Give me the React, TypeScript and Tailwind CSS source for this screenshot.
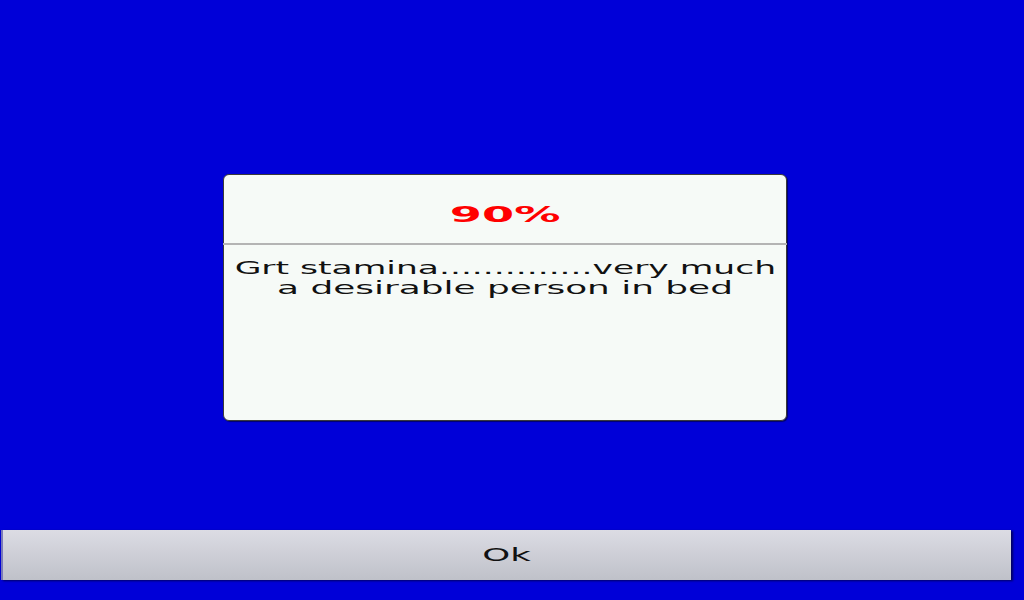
import React from "react";

const font = { fontFamily: '"DejaVu Sans", "Liberation Sans", sans-serif' };

export default function App() {
  return (
    <div
      className="w-[1024px] h-[600px] bg-[#0000d8] flex flex-col overflow-hidden"
      style={font}
    >
      {/* Result dialog */}
      <div className="pt-[174px] pl-[223px]">
        <div className="w-[564px] h-[247px] bg-[#f6faf7] border border-[#3a3a3a] rounded-[6px] shadow-[1px_1px_1px_rgba(0,0,0,0.5)] flex flex-col">
          <div className="h-[68px] pt-[12px] flex items-center justify-center">
            <span className="inline-block scale-x-[2.2] text-[21px] font-bold text-[#ff0000] leading-none">
              90%
            </span>
          </div>
          <div className="h-[2px] bg-[#b4b4b4] -mx-px" />
          <div className="pt-[13px] flex flex-col items-center text-[17px] leading-[20px] text-[#111]">
            <span className="inline-block scale-x-[2.03]">Grt stamina..............very much</span>
            <span className="inline-block scale-x-[2.11]">a desirable person in bed</span>
          </div>
        </div>
      </div>

      <div className="flex-1" />

      {/* Ok button */}
      <div className="mb-[20px] flex">
        <button className="ml-[1px] w-[1010px] h-[50px] bg-gradient-to-b from-[#dcdce4] to-[#bfc1c9] border-l-2 border-l-[#7a7ab8] shadow-[2px_1px_2px_rgba(0,0,0,0.55)] flex items-center justify-center">
          <span className="inline-block scale-x-[2.09] text-[17px] text-[#111] leading-none">Ok</span>
        </button>
      </div>
    </div>
  );
}
